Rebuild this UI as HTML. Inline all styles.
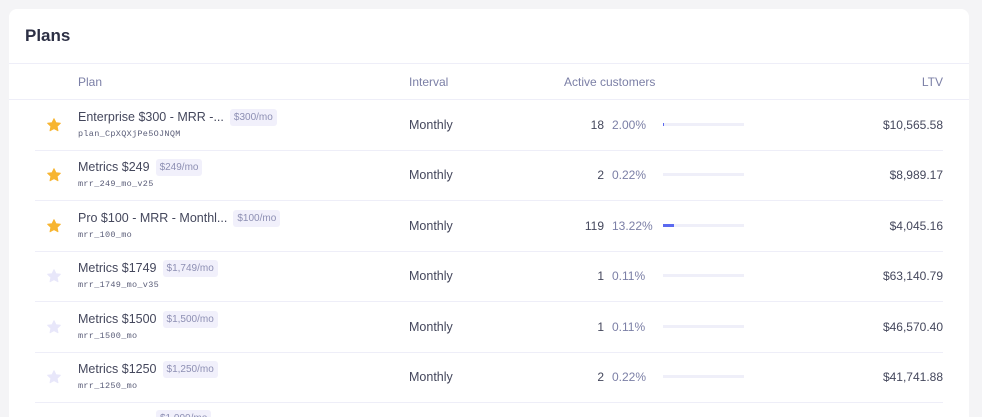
<!DOCTYPE html><html><head><style>
html,body{margin:0;height:417px;overflow:hidden}
body{background:#f4f4f6;font-family:"Liberation Sans",sans-serif;width:982px;position:relative}
.card{position:absolute;left:9px;top:9px;width:960px;height:420px;background:#fff;border-radius:8px}
.t{position:absolute;white-space:nowrap}
h1{position:absolute;left:25px;top:26px;margin:0;font-size:17px;font-weight:bold;color:#2c2f44}
.hl{position:absolute;height:1px;background:#eeeef8}
.hd{font-size:12px;color:#7b7fa6;top:75px}
.nm{font-size:12.5px;color:#44475c}
.badge{display:inline-block;vertical-align:middle;margin-left:6px;background:#f1f0fb;color:#8d8fb3;font-size:10px;padding:3px 4px;border-radius:3px}
.code{font-family:"Liberation Mono",monospace;font-size:8.5px;color:#5a5d78;letter-spacing:.3px}
.num{font-size:12px;color:#44475c}
.pct{font-size:12px;color:#7b7fa6}
.bar{position:absolute;left:663px;width:81px;height:3px;background:#efeff9}
.bar i{display:block;height:3px;background:#5b6af0}
</style></head><body>
<div class="card"></div>
<h1>Plans</h1>
<div class="hl" style="left:9px;width:960px;top:63px"></div>
<div class="t hd" style="left:78px">Plan</div>
<div class="t hd" style="left:409px">Interval</div>
<div class="t hd" style="left:564px">Active customers</div>
<div class="t hd" style="right:39px">LTV</div>
<div class="hl" style="left:9px;width:960px;top:99px"></div>
<div id="rows"></div>
<script>
var d=[["Enterprise $300 - MRR -...","$300/mo","plan_CpXQXjPe5OJNQM",18,"2.00%",1,"$10,565.58",1],
["Metrics $249","$249/mo","mrr_249_mo_v25",2,"0.22%",0,"$8,989.17",1],
["Pro $100 - MRR - Monthl...","$100/mo","mrr_100_mo",119,"13.22%",11,"$4,045.16",1],
["Metrics $1749","$1,749/mo","mrr_1749_mo_v35",1,"0.11%",0,"$63,140.79",0],
["Metrics $1500","$1,500/mo","mrr_1500_mo",1,"0.11%",0,"$46,570.40",0],
["Metrics $1250","$1,250/mo","mrr_1250_mo",2,"0.22%",0,"$41,741.88",0]];
var h="";
d.forEach(function(r,i){var y=100+50.4*i;
h+='<svg class="t" style="left:46px;top:'+(y+17)+'px" width="16" height="16" viewBox="0 0 24 24"><path d="M12 2.5l2.9 6.1 6.6.8-4.9 4.6 1.3 6.6L12 17.3l-5.9 3.3 1.3-6.6-4.9-4.6 6.6-.8z" fill="'+(r[7]?'#f7b531':'#e8e7fa')+'" stroke="'+(r[7]?'#f7b531':'#e8e7fa')+'" stroke-width="1.5" stroke-linejoin="round"/></svg>';
h+='<div class="t nm" style="left:78px;top:'+(y+9)+'px">'+r[0]+'<span class="badge">'+r[1]+'</span></div>';
h+='<div class="t code" style="left:78px;top:'+(y+29)+'px">'+r[2]+'</div>';
h+='<div class="t nm" style="left:409px;top:'+(y+18)+'px">Monthly</div>';
h+='<div class="t num" style="right:378px;top:'+(y+18)+'px">'+r[3]+'</div>';
h+='<div class="t pct" style="left:612px;top:'+(y+18)+'px">'+r[4]+'</div>';
h+='<div class="bar" style="top:'+(y+23)+'px"><i style="width:'+r[5]+'px"></i></div>';
h+='<div class="t num" style="right:39px;top:'+(y+18)+'px">'+r[6]+'</div>';
h+='<div class="hl" style="left:35px;width:908px;top:'+(y+50)+'px"></div>';
});
h+='<div class="t" style="left:150px;top:410px"><span class="badge">$1,000/mo</span></div>';
document.getElementById("rows").innerHTML=h;
</script>
</body></html>
